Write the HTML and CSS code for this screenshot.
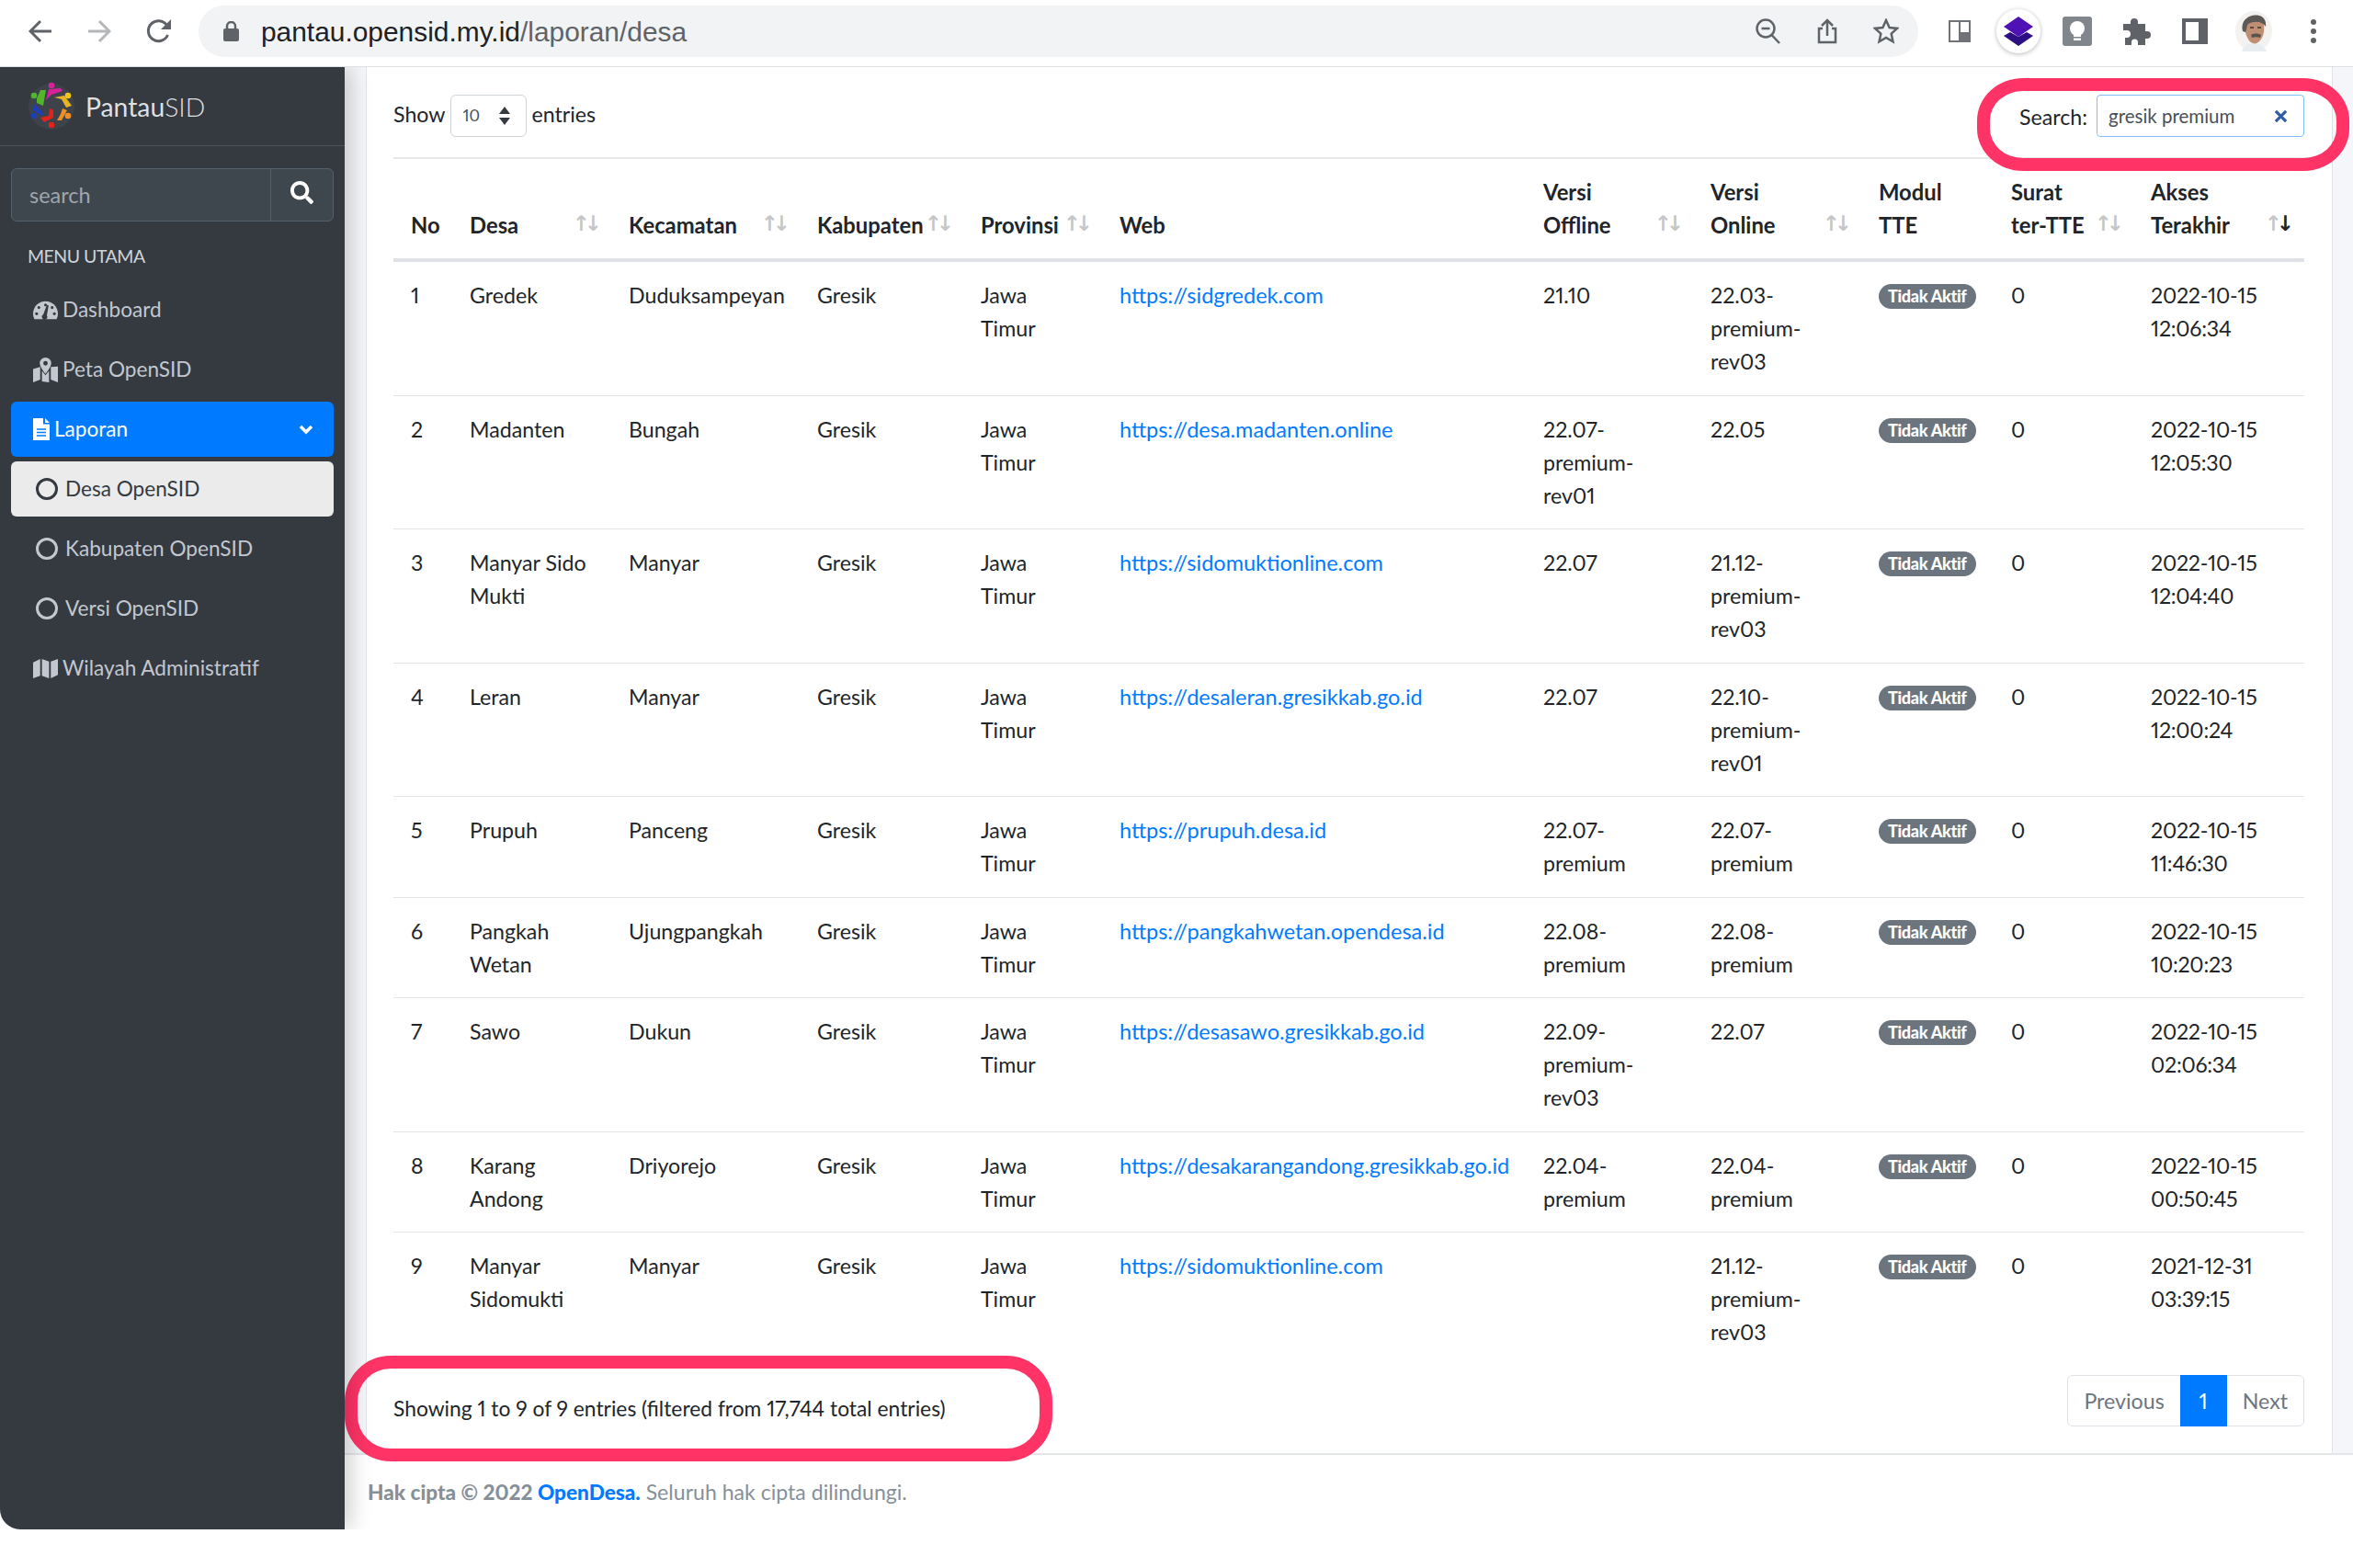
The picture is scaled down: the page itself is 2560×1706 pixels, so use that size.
FILE: index.html
```html
<!DOCTYPE html>
<html lang="id">
<head>
<meta charset="utf-8">
<title>PantauSID</title>
<link rel="stylesheet" href="styles.css">
</head>
<body>
<header class="toolbar">
  <svg class="tb back" viewBox="0 0 26 26"><path d="M25 13H3M13 2 2 13l11 11"/></svg>
  <svg class="tb fwd" viewBox="0 0 26 26"><path d="M1 13h22M13 2l11 11-11 11"/></svg>
  <svg class="tb reload" viewBox="0 0 28 28"><path d="M23.5 18a11 11 0 1 1-1-10.5"/><path class="fill" d="M27 1v11H16z"/></svg>
  <div class="omnibox">
    <svg class="lock" viewBox="0 0 17 22"><rect x="0" y="8" width="17" height="14" rx="2"/><path class="shackle" d="M4 9V5.5a4.500 4.500 0 0 1 9 0V9"/></svg>
    <span class="url">pantau.opensid.my.id<span class="url-path">/laporan/desa</span></span>
    <svg class="om-icon" viewBox="0 0 28 28"><circle cx="11" cy="11" r="9.500"/><path d="M17.500 18 26 27M6.500 11h9"/></svg>
    <svg class="om-icon" viewBox="0 0 28 28"><path d="M14 19V2M8 8l6-6 6 6M9 11H5v15h18V11h-4"/></svg>
    <svg class="om-icon" viewBox="0 0 28 28"><path d="m14 2 3.600 8 8.400.9-6.300 5.800 1.800 8.600L14 21l-7.500 4.300 1.800-8.600L2 10.900l8.400-.9z"/></svg>
  </div>
  <div class="extensions">
    <svg class="ext" viewBox="0 0 40 40"><rect x="8" y="8" width="24" height="24" fill="#6f7377"/><rect x="10" y="10" width="9" height="20" fill="#fff"/><rect x="21" y="10" width="9" height="11" fill="#fff"/></svg>
    <span class="ext-round"><svg viewBox="0 0 40 40"><path d="m4 25 7-4 9 5 9-5 7 4-16 11z" fill="#2e0e83"/><path d="m20 4 16 11-16 11L4 15z" fill="#4f10b5"/></svg></span>
    <svg class="ext" viewBox="0 0 40 40"><rect x="4" y="4" width="32" height="32" rx="3" fill="#80868b"/><circle cx="20" cy="17" r="8" fill="#fff"/><rect x="16" y="22" width="8" height="4" fill="#fff"/><rect x="16" y="27.500" width="8" height="2.500" fill="#fff"/></svg>
    <svg class="ext" viewBox="0 0 40 40"><path fill="#5f6368" d="M6 12h8v-2a4 4 0 0 1 8 0v2h8v8h2a4 4 0 0 1 0 8h-2v7H22v-3a3.500 3.500 0 0 0-7 0v3H8v-8h2a4 4 0 0 0 0-8H6z"/></svg>
    <svg class="ext" viewBox="0 0 40 40"><rect x="6" y="6" width="28" height="28" fill="#5f6368"/><rect x="10" y="10" width="14" height="20" fill="#fff"/></svg>
    <svg class="ext avatar" viewBox="0 0 44 44"><ellipse cx="22" cy="22" rx="20" ry="22" fill="#f3f2f1"/><path d="M9 44c2-7 8-9 13-9s11 2 14 9z" fill="#e8edf1"/><path d="M12 15c0-7 20-9 21 0 1 8-1 14-5 18-3 3-6 3-9 1-4-3-7-11-7-19z" fill="#c08e72"/><path d="M10 22C7 8 20 3 28 5c5 1 8 6 7 12-3-5-11-7-19-3-2 2-1 5-3 9z" fill="#5c5957"/><path d="M19 26c3-2 8-2 11 0l-1 3c-3-1-6-1-9 0z" fill="#5a524e"/><path d="M18 18h4M26 18h4" stroke="#3c3532" stroke-width="1.500"/></svg>
    <svg class="ext kebab" viewBox="0 0 8 30"><circle cx="4" cy="5" r="3"/><circle cx="4" cy="15" r="3"/><circle cx="4" cy="25" r="3"/></svg>
  </div>
</header>

<div class="app">
  <aside class="sidebar">
    <div class="brand">
      <span class="logo">
        <svg viewBox="0 0 75 75">
          <circle cx="36" cy="39" r="25" fill="#3e434b"/>
          <circle cx="36" cy="16" r="3.300" fill="#d6229a"/><path d="m33 20 13-1 2 3-12 4-6 6z" fill="#d6229a"/>
          <circle cx="54" cy="27" r="3.300" fill="#f0c419"/><path d="m39 29 11-2 8 11-6 2-5-9z" fill="#e6b422"/>
          <circle cx="54" cy="49" r="3.300" fill="#ef8f22"/><path d="m48 41 5 2-6 11h-5l4-7z" fill="#ef8f22"/>
          <circle cx="36" cy="59" r="3.300" fill="#e2231a"/><path d="m34 41 4 2v8l-10 5-4-5 9-2z" fill="#e2231a"/>
          <circle cx="17" cy="49" r="3.300" fill="#1c3fb5"/><path d="m17 35 10 11-1 3-10-6z" fill="#1c3fb5"/>
          <circle cx="17" cy="27" r="3.300" fill="#52b52a"/><path d="M24 21h6l-3 17-7-3v-5z" fill="#52b52a"/>
        </svg>
      </span>
      <span class="brand-text"><span class="brand-a">Pantau</span><span class="brand-b">SID</span></span>
    </div>
    <form class="side-search">
      <span class="side-search-input">search</span>
      <span class="side-search-btn"><svg viewBox="0 0 512 512"><path fill="#fff" d="M505 442.700 405.300 343c-4.500-4.500-10.600-7-17-7H372c27.600-35.300 44-79.700 44-128C416 93.100 322.900 0 208 0S0 93.100 0 208s93.100 208 208 208c48.300 0 92.700-16.400 128-44v16.300c0 6.400 2.500 12.500 7 17l99.700 99.700c9.400 9.400 24.600 9.400 33.900 0l28.300-28.300c9.400-9.400 9.400-24.600.1-34zM208 336c-70.700 0-128-57.200-128-128 0-70.700 57.200-128 128-128 70.700 0 128 57.200 128 128 0 70.700-57.200 128-128 128z"/></svg></span>
    </form>
    <div class="menu-head">MENU UTAMA</div>
    <nav class="menu">
      <a class="item"><svg class="ico" viewBox="0 0 28 24"><path d="M14 2C6.500 2 0 8 0 16c0 2.500.6 4.500 1.500 6h25c.9-1.500 1.500-3.500 1.500-6C28 8 21.500 2 14 2z"/><g fill="#343a40"><circle cx="14" cy="6" r="1.600"/><circle cx="6.500" cy="9" r="1.600"/><circle cx="21.500" cy="9" r="1.600"/><circle cx="4" cy="16" r="1.600"/><circle cx="24" cy="16" r="1.600"/><path d="m11.500 17 4-11 2 .5-2 11.500a3 3 0 1 1-4-1z"/></g></svg><span>Dashboard</span></a>
      <a class="item"><svg class="ico" viewBox="0 0 28 28"><path d="M14 0a6.500 6.500 0 0 0-6.500 6.500C7.500 10 12 16 14 18.500 16 16 20.500 10 20.500 6.500A6.500 6.500 0 0 0 14 0zm0 9a2.500 2.500 0 1 1 0-5 2.500 2.500 0 0 1 0 5z"/><path d="M0 13v15l8-3V10.500zM20 10.500V25l8 3V10zM10 15v12l8 1V15l-4 5z"/></svg><span>Peta OpenSID</span></a>
      <a class="item active"><svg class="ico file" viewBox="0 0 18 24"><path d="M0 0h11v6.500h7V24H0zM13 0l5 5h-5z"/><path class="lines" d="M4 12h10M4 15.500h10M4 19h10"/></svg><span>Laporan</span><svg class="chev" viewBox="0 0 16 11"><path d="m2 2 6 6 6-6"/></svg></a>
      <a class="item sub current"><span class="ring"></span><span>Desa OpenSID</span></a>
      <a class="item sub"><span class="ring"></span><span>Kabupaten OpenSID</span></a>
      <a class="item sub"><span class="ring"></span><span>Versi OpenSID</span></a>
      <a class="item"><svg class="ico" viewBox="0 0 28 22"><path d="M0 4v18l8-3V0zM10 0v19l8 3V3zM20 3v19l8-4V0z"/></svg><span>Wilayah Administratif</span></a>
    </nav>
  </aside>

  <div class="main">
    <section class="card">
      <div class="controls">
        <div class="length">
          <span>Show</span>
          <span class="select"><span>10</span><svg viewBox="0 0 12 20"><path d="M6 0l6 8H0zM6 20l6-8H0z"/></svg></span>
          <span>entries</span>
        </div>
        <label class="filter">
          <span>Search:</span>
          <span class="filter-box"><input class="filter-input" type="text" value="gresik premium"><svg viewBox="0 0 12 12"><path d="m1.500 1.500 9 9M10.500 1.500l-9 9"/></svg></span>
        </label>
      </div>
      <table class="grid">
        <colgroup>
          <col class="c-no"><col class="c-desa"><col class="c-kec"><col class="c-kab"><col class="c-prov"><col class="c-web"><col class="c-off"><col class="c-on"><col class="c-tte"><col class="c-srt"><col class="c-aks">
        </colgroup>
        <thead>
          <tr>
            <th>No</th>
            <th class="sort">Desa</th>
            <th class="sort">Kecamatan</th>
            <th class="sort">Kabupaten</th>
            <th class="sort">Provinsi</th>
            <th>Web</th>
            <th class="sort">Versi<br>Offline</th>
            <th class="sort">Versi<br>Online</th>
            <th>Modul<br>TTE</th>
            <th class="sort">Surat<br>ter-TTE</th>
            <th class="sort desc">Akses<br>Terakhir</th>
          </tr>
        </thead>
        <tbody>
          <tr><td>1</td><td>Gredek</td><td>Duduksampeyan</td><td>Gresik</td><td>Jawa<br>Timur</td><td><a class="link">https://sidgredek.com</a></td><td>21.10</td><td>22.03-<br>premium-<br>rev03</td><td><span class="badge">Tidak Aktif</span></td><td>0</td><td>2022-10-15<br>12:06:34</td></tr>
          <tr><td>2</td><td>Madanten</td><td>Bungah</td><td>Gresik</td><td>Jawa<br>Timur</td><td><a class="link">https://desa.madanten.online</a></td><td>22.07-<br>premium-<br>rev01</td><td>22.05</td><td><span class="badge">Tidak Aktif</span></td><td>0</td><td>2022-10-15<br>12:05:30</td></tr>
          <tr><td>3</td><td>Manyar Sido<br>Mukti</td><td>Manyar</td><td>Gresik</td><td>Jawa<br>Timur</td><td><a class="link">https://sidomuktionline.com</a></td><td>22.07</td><td>21.12-<br>premium-<br>rev03</td><td><span class="badge">Tidak Aktif</span></td><td>0</td><td>2022-10-15<br>12:04:40</td></tr>
          <tr><td>4</td><td>Leran</td><td>Manyar</td><td>Gresik</td><td>Jawa<br>Timur</td><td><a class="link">https://desaleran.gresikkab.go.id</a></td><td>22.07</td><td>22.10-<br>premium-<br>rev01</td><td><span class="badge">Tidak Aktif</span></td><td>0</td><td>2022-10-15<br>12:00:24</td></tr>
          <tr><td>5</td><td>Prupuh</td><td>Panceng</td><td>Gresik</td><td>Jawa<br>Timur</td><td><a class="link">https://prupuh.desa.id</a></td><td>22.07-<br>premium</td><td>22.07-<br>premium</td><td><span class="badge">Tidak Aktif</span></td><td>0</td><td>2022-10-15<br>11:46:30</td></tr>
          <tr><td>6</td><td>Pangkah<br>Wetan</td><td>Ujungpangkah</td><td>Gresik</td><td>Jawa<br>Timur</td><td><a class="link">https://pangkahwetan.opendesa.id</a></td><td>22.08-<br>premium</td><td>22.08-<br>premium</td><td><span class="badge">Tidak Aktif</span></td><td>0</td><td>2022-10-15<br>10:20:23</td></tr>
          <tr><td>7</td><td>Sawo</td><td>Dukun</td><td>Gresik</td><td>Jawa<br>Timur</td><td><a class="link">https://desasawo.gresikkab.go.id</a></td><td>22.09-<br>premium-<br>rev03</td><td>22.07</td><td><span class="badge">Tidak Aktif</span></td><td>0</td><td>2022-10-15<br>02:06:34</td></tr>
          <tr><td>8</td><td>Karang<br>Andong</td><td>Driyorejo</td><td>Gresik</td><td>Jawa<br>Timur</td><td><a class="link">https://desakarangandong.gresikkab.go.id</a></td><td>22.04-<br>premium</td><td>22.04-<br>premium</td><td><span class="badge">Tidak Aktif</span></td><td>0</td><td>2022-10-15<br>00:50:45</td></tr>
          <tr><td>9</td><td>Manyar<br>Sidomukti</td><td>Manyar</td><td>Gresik</td><td>Jawa<br>Timur</td><td><a class="link">https://sidomuktionline.com</a></td><td></td><td>21.12-<br>premium-<br>rev03</td><td><span class="badge">Tidak Aktif</span></td><td>0</td><td>2021-12-31<br>03:39:15</td></tr>
        </tbody>
      </table>
      <div class="table-foot">
        <div class="info">Showing 1 to 9 of 9 entries (filtered from 17,744 total entries)</div>
        <div class="pager">
          <span class="pg">Previous</span>
          <span class="pg now">1</span>
          <span class="pg">Next</span>
        </div>
      </div>
    </section>
    <footer class="foot"><strong class="foot-strong">Hak cipta © 2022 <a class="foot-link">OpenDesa.</a></strong> Seluruh hak cipta dilindungi.</footer>
  </div>
</div>

<div class="mark mark-search"></div>
<div class="mark mark-info"></div>
</body>
</html>
```
FILE: styles.css
```css
* { box-sizing: border-box; }
html, body { margin: 0; padding: 0; background: #fff; }
body {
  position: relative;
  width: 2560px;
  height: 1706px;
  overflow: hidden;
  font-family: "Lato", "Noto Sans", sans-serif;
  font-size: 23.2px;
  font-variant-numeric: proportional-nums;
  line-height: 36px;
  color: #212529;
}

/* browser chrome */
.toolbar {
  display: flex;
  align-items: center;
  height: 74px;
  padding: 0 0 4px 31px;
  background: #fff;
  border-bottom: 2px solid #dee1e3;
}
.tb { width: 26px; height: 26px; fill: none; stroke-width: 3; }
.tb.back { stroke: #5f6368; }
.tb.fwd { margin-left: 38px; stroke: #b4b6b8; }
.tb.reload { margin-left: 38px; width: 28px; height: 28px; stroke: #5f6368; }
.tb .fill { fill: #5f6368; stroke: none; }
.omnibox {
  display: flex;
  align-items: center;
  width: 1871px;
  height: 56px;
  margin-left: 29px;
  padding: 0 21px 0 27px;
  border-radius: 28px;
  background: #f1f3f4;
}
.lock { width: 17px; height: 22px; fill: #5f6368; }
.shackle { fill: none; stroke: #5f6368; stroke-width: 2.500; }
.url {
  flex: 1;
  margin: 2px 0 0 24px;
  font-family: "Liberation Sans", sans-serif;
  font-size: 29.9px;
  color: #202124;
}
.url-path { color: #5f6368; }
.om-icon { width: 28px; height: 28px; margin-left: 36px; fill: none; stroke: #5f6368; stroke-width: 2.500; }
.extensions { display: flex; align-items: center; margin-left: 25px; }
.ext { width: 40px; height: 40px; margin-right: 24px; flex: none; }
.ext-round {
  display: block;
  width: 48px;
  height: 48px;
  margin: 0 20px 0 -4px;
  padding: 4px;
  border-radius: 50%;
  background: #fff;
  box-shadow: 0 1px 5px rgba(0, 0, 0, .28);
}
.ext-round svg { display: block; width: 40px; height: 40px; }
.ext.avatar { width: 44px; height: 44px; margin: 0 0 0 -2px; }
.ext.kebab { width: 8px; height: 30px; margin: 0 0 0 39px; fill: #5f6368; }

/* application frame */
.app {
  display: flex;
  height: 1591px;
  margin-top: -1px;
  overflow: hidden;
  border-bottom-left-radius: 22px;
  background: #f4f6f9;
}
.sidebar {
  position: relative;
  z-index: 2;
  flex: none;
  width: 375px;
  padding: 0 12px;
  background: #343a40;
  box-shadow: 6px 0 22px rgba(0, 0, 0, .2);
  color: #c2c7d0;
  font-size: 22.6px;
}
.brand {
  display: flex;
  align-items: center;
  height: 86px;
  margin: 0 -12px;
  padding: 3px 0 0 20px;
  border-bottom: 1px solid #4b545c;
}
.logo { display: block; width: 75px; height: 75px; margin-top: -6px; }
.logo svg { display: block; width: 75px; height: 75px; }
.brand-text { margin: -2px 0 0 -2px; font-size: 28.3px; line-height: 40px; color: rgba(255, 255, 255, .85); }
.brand-b { font-weight: 300; }
.side-search {
  display: flex;
  height: 58px;
  margin-top: 24px;
  border: 1px solid #56606a;
  border-radius: 6px;
  background: #3f474e;
}
.side-search-input { flex: 1; padding: 10px 0 0 19px; font-size: 23.5px; color: #a0a6ad; }
.side-search-btn {
  display: flex;
  align-items: center;
  justify-content: center;
  width: 68px;
  padding-bottom: 6px;
  border-left: 1px solid #56606a;
}
.side-search-btn svg { width: 25px; height: 25px; }
.menu-head { margin: 20px 0 0 18px; height: 36px; font-size: 19.5px; letter-spacing: -.5px; color: #d0d4db; }
.menu { display: flex; flex-direction: column; gap: 5px; margin-top: 10px; }
.item {
  display: flex;
  align-items: center;
  height: 60px;
  padding-left: 24px;
  border-radius: 6px;
}
.ico { width: 27px; height: 27px; margin-right: 5px; flex: none; fill: #c2c7d0; }
.item.active { background: #007bff; color: #fff; }
.item.active .ico { width: 18px; height: 24px; margin-right: 5px; fill: #fff; }
.file .lines { stroke: #007bff; stroke-width: 1.500; fill: none; }
.chev { width: 16px; height: 11px; margin: 0 22px 0 auto; fill: none; stroke: #fff; stroke-width: 3.500; }
.item.sub { padding-left: 27px; }
.ring { width: 24px; height: 24px; margin-right: 8px; border: 3px solid currentColor; border-radius: 50%; flex: none; }
.item.current { background: rgba(255, 255, 255, .9); color: #343a40; }

/* main */
.main {
  flex: 1;
  display: flex;
  flex-direction: column;
  padding-left: 23px;
  min-width: 0;
}
.card {
  flex: none;
  height: 1508px;
  margin-right: 22px;
  padding: 30px 30px 0 29px;
  background: #fff;
  border-left: 1px solid #dfe2e6;
  border-right: 1px solid #dfe2e6;
}
.controls {
  display: flex;
  justify-content: space-between;
  height: 70px;
  border-bottom: 2px solid #e6e8eb;
}
.length, .filter { display: flex; align-items: flex-start; }
.length > span:first-child { margin-top: 3px; }
.length > span:last-child { margin: 3px 0 0 6px; }
.select {
  display: flex;
  align-items: center;
  justify-content: space-between;
  width: 83px;
  height: 46px;
  margin-left: 5px;
  padding: 0 17px 0 13px;
  border: 1px solid #ced4da;
  border-radius: 6px;
  font-size: 17.500px;
  color: #495057;
}
.select svg { width: 12px; height: 20px; fill: #343a40; }
.filter { margin-left: auto; }
.filter > span:first-child { margin: 6px 0 0 0; }
.filter-box {
  display: flex;
  align-items: center;
  width: 226px;
  height: 46px;
  margin-left: 10px;
  padding: 0 17px 0 12px;
  border: 1px solid #80bdff;
  border-radius: 4px;
}
.filter-input {
  flex: 1;
  min-width: 0;
  padding: 0;
  border: 0;
  outline: 0;
  font: inherit;
  font-size: 20.500px;
  color: #495057;
  background: transparent;
}
.filter-box svg { width: 15px; height: 15px; fill: none; stroke: #2f5ea8; stroke-width: 2.500; }

/* table */
.grid { width: 2079px; border-collapse: collapse; table-layout: fixed; }
.c-no { width: 65px; } .c-desa { width: 173px; } .c-kec { width: 205px; } .c-kab { width: 178px; }
.c-prov { width: 151px; } .c-web { width: 461px; } .c-off { width: 182px; } .c-on { width: 183px; }
.c-tte { width: 144px; } .c-srt { width: 152px; } .c-aks { width: 185px; }
.grid th {
  position: relative;
  padding: 18px;
  text-align: left;
  vertical-align: bottom;
  font-size: 23.8px;
  font-weight: 700;
  border-bottom: 4px solid #dee2e6;
}
.grid th:first-child, .grid td:first-child { padding-left: 19px; }
.sort::before, .sort::after {
  position: absolute;
  bottom: 23px;
  font-family: "DejaVu Sans", sans-serif;
  font-size: 23px;
  font-weight: 700;
  line-height: 30px;
  opacity: .26;
}
.sort::before { content: "\2191"; right: 24px; }
.sort::after { content: "\2193"; right: 11px; }
.desc::after { opacity: 1; }
.grid td {
  padding: 18px 18px 18.500px;
  vertical-align: top;
  border-bottom: 1px solid #e3e6e9;
  white-space: nowrap;
}
.grid td:last-child { letter-spacing: -.25px; }
.grid tbody tr:last-child td { border-bottom: 0; }
.link { font-size: 23.5px; color: #007bff; }
.badge {
  display: inline-block;
  height: 27px;
  margin-top: 6px;
  padding: 0 10px;
  border-radius: 14px;
  background: #6c757d;
  color: #fff;
  font-size: 18px;
  font-weight: 900;
  letter-spacing: -.3px;
  line-height: 27px;
  vertical-align: top;
}
.table-foot { display: flex; justify-content: space-between; align-items: flex-start; margin-top: 10px; }
.info { margin-top: 18px; font-size: 22.8px; }
.pager {
  display: flex;
  height: 56px;
  border: 1px solid #dee2e6;
  border-radius: 6px;
  color: #6c757d;
}
.pg { padding: 9px 17px 0; }
.pg.now { margin: -1px 0; width: 51px; height: 56px; padding: 10px 0 0; text-align: center; background: #007bff; color: #fff; }

.foot {
  flex: 1;
  margin-left: -23px;
  padding: 22px 0 0 25px;
  border-top: 2px solid #e3e6e9;
  background: #fff;
  font-size: 23.1px;
  color: #869099;
}
.foot-strong { font-size: 22.6px; font-weight: 900; }
.foot-link { color: #007bff; }

/* hand-drawn annotation frames */
.mark { position: absolute; border: 14px solid #ff3366; }
.mark-search { left: 2151px; top: 85px; width: 405px; height: 101px; border-radius: 50px 50px 50px 50px / 46px; }
.mark-info { left: 375px; top: 1475px; width: 770px; height: 115px; border-radius: 50px; }
```
